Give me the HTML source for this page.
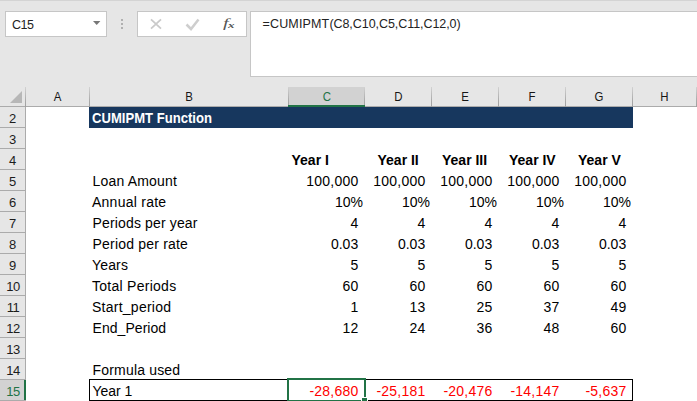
<!DOCTYPE html>
<html><head><meta charset="utf-8"><title>CUMIPMT Function</title>
<style>
html,body{margin:0;padding:0;}
body{width:697px;height:401px;overflow:hidden;background:#e6e6e6;position:relative;font-family:"Liberation Sans",sans-serif;font-size:14px;color:#000;}
div,span{position:absolute;white-space:nowrap;line-height:1;}
.box{background:#fff;border:1px solid #c6c6c6;box-sizing:border-box;}
.ch{font-size:13px;color:#161616;text-align:center;top:90px;height:14px;line-height:14px;transform:scaleX(0.88);}
.rh{font-size:13px;color:#1c1c1c;text-align:center;left:0;width:25px;height:14px;line-height:14px;}
.vs{width:1px;background:linear-gradient(#d2d2d2,#a8a8a8 70%,#a0a0a0);top:87px;height:20px;}
.hs{height:1px;background:#ababab;left:0;width:26px;}
.t{height:16px;line-height:16px;font-size:14px;}
.r{text-align:right;}
.b{font-weight:bold;}
.red{color:#ff0000;}
</style></head><body>

<div style="left:0;top:0;width:697px;height:1px;background:#d4d4d4"></div>
<div class="box" style="left:5px;top:11px;width:102px;height:26px"></div>
<div style="left:12px;top:17px;font-size:12.5px;letter-spacing:-0.5px;height:16px;line-height:16px;color:#222">C15</div>
<svg style="position:absolute;left:93px;top:21px" width="8" height="5"><polygon points="0,0 7.4,0 3.7,4" fill="#777"/></svg>
<div style="left:121px;top:19px;width:2px;height:2px;background:#b0b0b0"></div>
<div style="left:121px;top:23px;width:2px;height:2px;background:#b0b0b0"></div>
<div style="left:121px;top:27px;width:2px;height:2px;background:#b0b0b0"></div>
<div class="box" style="left:137px;top:11px;width:110px;height:26px"></div>
<svg style="position:absolute;left:148px;top:16px" width="16" height="16"><path d="M3,3.3 L13,12.7 M13,3.3 L3,12.7" stroke="#cacaca" stroke-width="1.8" fill="none"/></svg>
<svg style="position:absolute;left:184px;top:16px" width="18" height="16"><path d="M2.5,8.5 L7,13 L14.5,3.5" stroke="#cecece" stroke-width="2.5" fill="none"/></svg>
<div style="left:222px;top:15px;width:14px;font-family:'Liberation Serif',serif;font-style:italic;font-size:13.5px;height:16px;line-height:16px;color:#555"><span style="left:0.5px;top:0px;transform:scaleX(1.5);transform-origin:0 0;line-height:16px">f</span><span style="font-size:9px;font-weight:bold;left:5.5px;top:1.5px;line-height:16px;transform:scaleX(1.45);transform-origin:0 0">x</span></div>
<div class="box" style="left:250px;top:11px;width:460px;height:66px"></div>
<div class="t" style="left:262.5px;top:16px;color:#222;font-size:12.5px"><span style="position:static;letter-spacing:0.16px">=CUMIPMT</span><span style="position:static;letter-spacing:-0.06px">(C8,C10,C5,C11,C12,0)</span></div>
<div style="left:289px;top:87px;width:75px;height:18px;background:#d2d2d2"></div>
<div style="left:0;top:106px;width:697px;height:1px;background:#ababab"></div>
<div class="vs" style="left:25px"></div>
<div class="vs" style="left:89px"></div>
<div class="vs" style="left:288px"></div>
<div class="vs" style="left:364px"></div>
<div class="vs" style="left:431px"></div>
<div class="vs" style="left:498px"></div>
<div class="vs" style="left:565px"></div>
<div class="vs" style="left:632px"></div>
<div class="vs" style="left:696px"></div>
<div style="left:288px;top:105px;width:77px;height:2px;background:#217346"></div>
<div class="ch" style="left:26px;width:63px">A</div>
<div class="ch" style="left:90px;width:198px">B</div>
<div class="ch" style="left:289px;width:76px;color:#217346">C</div>
<div class="ch" style="left:366px;width:65px">D</div>
<div class="ch" style="left:432px;width:66px">E</div>
<div class="ch" style="left:499px;width:66px">F</div>
<div class="ch" style="left:566px;width:66px">G</div>
<div class="ch" style="left:633px;width:63px">H</div>
<svg style="position:absolute;left:10px;top:91px" width="13" height="13"><polygon points="12,0 12,12 0,12" fill="#b7b7b7"/></svg>
<div style="left:26px;top:107px;width:671px;height:294px;background:#fff"></div>
<div style="left:25px;top:107px;width:1px;height:294px;background:#ababab"></div>
<div style="left:0;top:380px;width:24px;height:21px;background:#d2d2d2"></div>
<div style="left:24px;top:380px;width:2px;height:21px;background:#217346"></div>
<div class="hs" style="top:127px"></div>
<div class="rh" style="top:112px">2</div>
<div class="hs" style="top:148px"></div>
<div class="rh" style="top:133px">3</div>
<div class="hs" style="top:169px"></div>
<div class="rh" style="top:154px">4</div>
<div class="hs" style="top:190px"></div>
<div class="rh" style="top:175px">5</div>
<div class="hs" style="top:211px"></div>
<div class="rh" style="top:196px">6</div>
<div class="hs" style="top:232px"></div>
<div class="rh" style="top:217px">7</div>
<div class="hs" style="top:253px"></div>
<div class="rh" style="top:238px">8</div>
<div class="hs" style="top:274px"></div>
<div class="rh" style="top:259px">9</div>
<div class="hs" style="top:295px"></div>
<div class="rh" style="top:280px;letter-spacing:-0.5px;left:0.6px">10</div>
<div class="hs" style="top:316px"></div>
<div class="rh" style="top:301px;letter-spacing:-0.5px;left:0.6px">11</div>
<div class="hs" style="top:337px"></div>
<div class="rh" style="top:322px;letter-spacing:-0.5px;left:0.6px">12</div>
<div class="hs" style="top:358px"></div>
<div class="rh" style="top:343px;letter-spacing:-0.5px;left:0.6px">13</div>
<div class="hs" style="top:379px"></div>
<div class="rh" style="top:364px;letter-spacing:-0.5px;left:0.6px">14</div>
<div class="hs" style="top:400px"></div>
<div class="rh" style="top:385px;color:#217346;letter-spacing:-0.5px;left:0.6px">15</div>
<div style="left:89px;top:107px;width:544px;height:21px;background:#17375e"></div>
<div class="t b" style="left:92px;top:110px;color:#fff;font-size:14px;transform:scaleX(0.935);transform-origin:0 0">CUMIPMT Function</div>
<div class="t" style="left:92.6px;top:173px;letter-spacing:0.17px">Loan Amount</div>
<div class="t" style="left:92px;top:194px;letter-spacing:0.25px">Annual rate</div>
<div class="t" style="left:92.6px;top:215px;letter-spacing:0.14px">Periods per year</div>
<div class="t" style="left:92.6px;top:236px;letter-spacing:0.19px">Period per rate</div>
<div class="t" style="left:92px;top:257px;letter-spacing:0.15px">Years</div>
<div class="t" style="left:92px;top:278px;letter-spacing:0.27px">Total Periods</div>
<div class="t" style="left:92px;top:299px;letter-spacing:0.25px">Start_period</div>
<div class="t" style="left:92.6px;top:320px;letter-spacing:0.04px">End_Period</div>
<div class="t" style="left:92.6px;top:362px;letter-spacing:0.17px">Formula used</div>
<div class="t" style="left:92.4px;top:383px;letter-spacing:0px">Year 1</div>
<div class="t b" style="left:291.5px;top:152px">Year I</div>
<div class="t b" style="left:377.5px;top:152px">Year II</div>
<div class="t b" style="left:442px;top:152px">Year III</div>
<div class="t b" style="left:509px;top:152px">Year IV</div>
<div class="t b" style="left:578px;top:152px">Year V</div>
<div class="t r" style="left:288.2px;width:70px;top:173px;letter-spacing:0.2px;margin-left:0.2px">100,000</div>
<div class="t r" style="left:355.2px;width:70px;top:173px;letter-spacing:0.2px;margin-left:0.2px">100,000</div>
<div class="t r" style="left:422.2px;width:70px;top:173px;letter-spacing:0.2px;margin-left:0.2px">100,000</div>
<div class="t r" style="left:489.2px;width:70px;top:173px;letter-spacing:0.2px;margin-left:0.2px">100,000</div>
<div class="t r" style="left:556.2px;width:70px;top:173px;letter-spacing:0.2px;margin-left:0.2px">100,000</div>
<div class="t r" style="left:293.0px;width:70px;top:194px">10%</div>
<div class="t r" style="left:360.0px;width:70px;top:194px">10%</div>
<div class="t r" style="left:427.0px;width:70px;top:194px">10%</div>
<div class="t r" style="left:494.0px;width:70px;top:194px">10%</div>
<div class="t r" style="left:561.0px;width:70px;top:194px">10%</div>
<div class="t r" style="left:288.2px;width:70px;top:215px">4</div>
<div class="t r" style="left:355.2px;width:70px;top:215px">4</div>
<div class="t r" style="left:422.2px;width:70px;top:215px">4</div>
<div class="t r" style="left:489.2px;width:70px;top:215px">4</div>
<div class="t r" style="left:556.2px;width:70px;top:215px">4</div>
<div class="t r" style="left:288.2px;width:70px;top:236px">0.03</div>
<div class="t r" style="left:355.2px;width:70px;top:236px">0.03</div>
<div class="t r" style="left:422.2px;width:70px;top:236px">0.03</div>
<div class="t r" style="left:489.2px;width:70px;top:236px">0.03</div>
<div class="t r" style="left:556.2px;width:70px;top:236px">0.03</div>
<div class="t r" style="left:288.2px;width:70px;top:257px">5</div>
<div class="t r" style="left:355.2px;width:70px;top:257px">5</div>
<div class="t r" style="left:422.2px;width:70px;top:257px">5</div>
<div class="t r" style="left:489.2px;width:70px;top:257px">5</div>
<div class="t r" style="left:556.2px;width:70px;top:257px">5</div>
<div class="t r" style="left:288.2px;width:70px;top:278px">60</div>
<div class="t r" style="left:355.2px;width:70px;top:278px">60</div>
<div class="t r" style="left:422.2px;width:70px;top:278px">60</div>
<div class="t r" style="left:489.2px;width:70px;top:278px">60</div>
<div class="t r" style="left:556.2px;width:70px;top:278px">60</div>
<div class="t r" style="left:288.2px;width:70px;top:299px">1</div>
<div class="t r" style="left:355.2px;width:70px;top:299px">13</div>
<div class="t r" style="left:422.2px;width:70px;top:299px">25</div>
<div class="t r" style="left:489.2px;width:70px;top:299px">37</div>
<div class="t r" style="left:556.2px;width:70px;top:299px">49</div>
<div class="t r" style="left:288.2px;width:70px;top:320px">12</div>
<div class="t r" style="left:355.2px;width:70px;top:320px">24</div>
<div class="t r" style="left:422.2px;width:70px;top:320px">36</div>
<div class="t r" style="left:489.2px;width:70px;top:320px">48</div>
<div class="t r" style="left:556.2px;width:70px;top:320px">60</div>
<div class="t r red" style="left:288.2px;width:70px;top:383px;letter-spacing:0.2px;margin-left:0.2px">-28,680</div>
<div class="t r red" style="left:355.2px;width:70px;top:383px;letter-spacing:0.2px;margin-left:0.2px">-25,181</div>
<div class="t r red" style="left:422.2px;width:70px;top:383px;letter-spacing:0.2px;margin-left:0.2px">-20,476</div>
<div class="t r red" style="left:489.2px;width:70px;top:383px;letter-spacing:0.2px;margin-left:0.2px">-14,147</div>
<div class="t r red" style="left:556.2px;width:70px;top:383px;letter-spacing:0.2px;margin-left:0.2px">-5,637</div>
<div style="left:89px;top:379px;width:544px;height:1px;background:#000"></div>
<div style="left:89px;top:400px;width:544px;height:1px;background:#000"></div>
<div style="left:89px;top:379px;width:1px;height:22px;background:#000"></div>
<div style="left:632px;top:379px;width:1px;height:22px;background:#000"></div>
<div style="left:287px;top:378px;width:79px;height:2px;background:#217346"></div>
<div style="left:287px;top:378px;width:2px;height:23px;background:#217346"></div>
<div style="left:364px;top:378px;width:2px;height:19px;background:#217346"></div>
<div style="left:287px;top:400px;width:74px;height:1px;background:#217346"></div>
<div style="left:361px;top:397px;width:7px;height:4px;background:#fff"></div>
<div style="left:362px;top:398px;width:5px;height:3px;background:#217346"></div>
</body></html>
